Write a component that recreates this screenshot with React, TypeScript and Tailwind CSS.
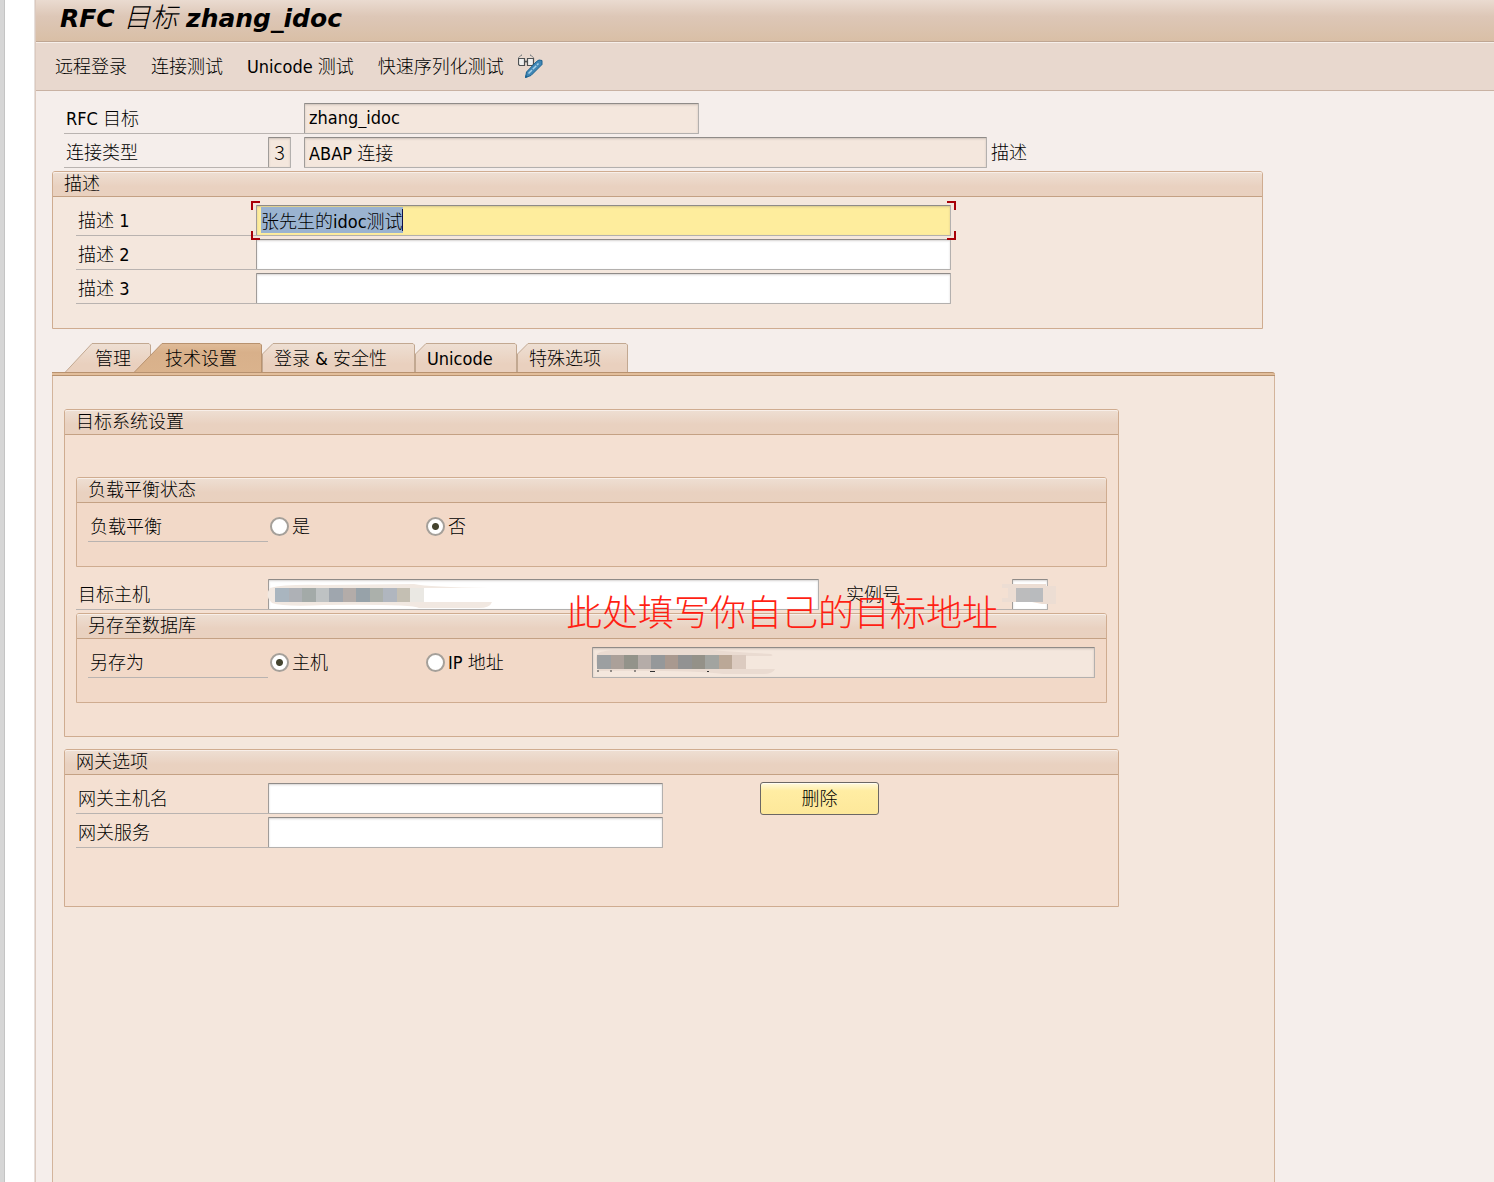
import React, { useEffect, useRef } from "react";
import clsx from "clsx";

const fieldBase =
  "block h-[31px] rounded-[1px] border border-[#b3b0ae] border-t-[#8f8b88] border-l-[#a09c99] px-1 pb-[2px] leading-6 font-light text-black outline-none shadow-[inset_0_1px_2px_rgba(120,110,105,0.3)]";

const Field = React.forwardRef<
  HTMLInputElement,
  React.InputHTMLAttributes<HTMLInputElement>
>(({ className, readOnly, ...props }, ref) => (
  <input
    ref={ref}
    type="text"
    readOnly={readOnly}
    className={clsx(fieldBase, readOnly ? "bg-[#f4e7dd]" : "bg-white", className)}
    {...props}
  />
));

const Label = ({
  htmlFor,
  className,
  children,
}: {
  htmlFor?: string;
  className: string;
  children: React.ReactNode;
}) => (
  <label
    htmlFor={htmlFor}
    className={clsx(
      "block h-[31px] shrink-0 border-b border-[#b9b3b0] pl-[2px] leading-8 whitespace-nowrap",
      className
    )}
  >
    {children}
  </label>
);

const Group = ({
  title,
  className,
  children,
}: {
  title: string;
  className?: string;
  children: React.ReactNode;
}) => (
  <section
    className={clsx("w-full rounded-t-[3px] border border-[#cfac90]", className)}
  >
    <h2 className="h-[25px] rounded-t-[2px] border-b border-[#c4a184] bg-linear-to-b from-[#eedfd3] via-[#e9d1c0] via-60% to-[#e9d1bf] pl-[11px] leading-6 shadow-[inset_0_1px_0_#f8efe9]">
      {title}
    </h2>
    {children}
  </section>
);

const Radio = ({
  name,
  label,
  defaultChecked,
}: {
  name: string;
  label: string;
  defaultChecked?: boolean;
}) => (
  <label className="flex h-[30px] w-[156px] items-center gap-[3px] pl-[2px] whitespace-nowrap">
    <input
      type="radio"
      name={name}
      defaultChecked={defaultChecked}
      className="size-[19px] appearance-none rounded-full border-2 border-[#a5a09a] bg-white checked:bg-[radial-gradient(circle,#45442f_3px,#ffffff_4px)]"
    />
    {label}
  </label>
);

const tabs = [
  { label: "管理", width: 87, slant: 28, pad: "pl-[31px] w-[87px]" },
  { label: "技术设置", width: 129, slant: 29, pad: "-ml-[18px] pl-8 w-[129px]", active: true },
  { label: "登录 & 安全性", width: 153, slant: 11, pad: "pl-3 w-[153px]" },
  { label: "Unicode", width: 102, slant: 11, pad: "pl-3 w-[102px]" },
  { label: "特殊选项", width: 111, slant: 11, pad: "pl-3 w-[111px]" },
];

const Tabs = () => (
  <div role="tablist" className="flex pl-3">
    {tabs.map(({ label, width, slant, pad, active }) => {
      const foot = slant > 20 ? 30 : slant;
      const shape = `M0.5 30 V${foot} L${slant} 0.5 H${width - 2} L${width - 0.5} 2 V30`;
      return (
        <button
          key={label}
          role="tab"
          aria-selected={!!active}
          className={clsx(
            "relative h-[30px] shrink-0 text-left leading-8 whitespace-nowrap",
            active && "z-10",
            pad
          )}
        >
          <svg
            aria-hidden="true"
            width={width}
            height="30"
            className="absolute inset-0"
          >
            <defs>
              <linearGradient id="tabFill" x1="0" y1="0" x2="0" y2="1">
                <stop offset="0" stopColor="#eedfd3" />
                <stop offset="0.7" stopColor="#e9d0be" />
                <stop offset="1" stopColor="#e9d0be" />
              </linearGradient>
              <linearGradient id="tabActive" x1="0" y1="0" x2="0" y2="1">
                <stop offset="0" stopColor="#dfbb98" />
                <stop offset="0.3" stopColor="#d8b08a" />
                <stop offset="1" stopColor="#dab38d" />
              </linearGradient>
            </defs>
            <path
              d={shape}
              fill={active ? "url(#tabActive)" : "url(#tabFill)"}
              stroke={active ? "#b8926f" : "#c2a891"}
            />
          </svg>
          <span className="relative">{label}</span>
        </button>
      );
    })}
  </div>
);

const hostCells = [
  "#a9b5bf", "#aeb1b6", "#a3aaa8", "#bec2c3", "#9fa6ae", "#b3aca9",
  "#97a2a9", "#abb0ab", "#b0b6bf", "#c4bfb3", "#eae8e3",
];

const savedCells = [
  "#9c9fa1", "#aba099", "#93938a", "#b5aca8", "#95989a", "#a9998f",
  "#929292", "#949188", "#a2a4a0", "#bba897", "#dccbc0",
];

const Cells = ({ colors, x, y }: { colors: string[]; x: number; y: number }) => (
  <>
    {colors.map((c, i) => (
      <rect
        key={i}
        x={x + i * 13.5}
        y={y}
        width="13.6"
        height="14"
        fill={c}
        shapeRendering="crispEdges"
      />
    ))}
  </>
);

const GlassesPencil = () => (
  <svg aria-hidden="true" width="26" height="26" viewBox="0 0 26 26" fill="none">
    <path d="M0.5 5 V3.5 L3 1.5 M3.5 2 V0.5 M12.5 2 V0.5 M15.5 5 V3.5 L13 1.5" stroke="#85888a" />
    <path d="M0.5 4.5 H6.5 V11.5 H1.5 L0.5 10.5 Z M9.5 4.5 H15.5 V10.5 L14.5 11.5 H9.5 Z" fill="#f1f0ef" stroke="#4e5153" strokeWidth="1.2" />
    <path d="M6.5 8.5 Q8 6 9.5 8.5" stroke="#4e5153" strokeWidth="1.4" />
    <path d="M7.5 23.5 L8.5 18 L18.5 7.5 L21 6 L24 6.5 V10.5 L13 21.5 Z" fill="#3f86b5" stroke="#1c628f" />
    <path d="M10.5 19.5 L20.5 9.5" stroke="#a6cfe8" strokeWidth="1.5" strokeDasharray="5 1" />
    <path d="M7 24 L7.8 21 L10 23 Z" fill="#17608f" />
  </svg>
);

const App = () => {
  const firstLine = useRef<HTMLInputElement>(null);

  useEffect(() => {
    firstLine.current?.focus();
    firstLine.current?.select();
  }, []);

  return (
    <div className="flex min-h-screen bg-white font-['DejaVu_Sans_Condensed','Noto_Sans_CJK_SC',sans-serif] text-[18px] font-light text-black">
      <div className="w-[35px] shrink-0 border-r border-[#e6dfdb]">
        <div className="h-full w-[5px] border-r border-[#c4c4c4] bg-[#d6d6d6]" />
      </div>

      <div className="flex min-w-0 flex-1 flex-col border-l border-[#dccabf] bg-[#f5eeeb]">
        <header className="flex h-[42px] items-start border-b border-[#bfa693] bg-linear-to-b from-[#eadbd0] via-[#ddc7b7] via-40% to-[#d9bfa6] pl-6">
          <h1 className="font-['DejaVu_Sans','Noto_Sans_CJK_SC',sans-serif] text-[25px] leading-9 font-bold whitespace-nowrap text-black italic">
            RFC <span className="text-[27px] font-light">目标</span> zhang_idoc
          </h1>
        </header>

        <nav className="flex h-[49px] items-center border-t border-b border-t-[#f6efea] border-b-[#c9b2a3] bg-[#e8d8ce] pl-[19px]">
          <div className="flex gap-6 whitespace-nowrap">
            <button>远程登录</button>
            <button>连接测试</button>
            <button>Unicode 测试</button>
            <button>快速序列化测试</button>
          </div>
          <button aria-label="显示/更改" className="ml-[14px]">
            <GlassesPencil />
          </button>
        </nav>

        <main className="flex flex-1 flex-col pt-3 pl-4">
          <div className="mb-[3px] flex flex-col gap-[3px] pl-3">
            <div className="flex">
              <Label htmlFor="dest" className="w-[240px]">
                RFC 目标
              </Label>
              <Field id="dest" readOnly value="zhang_idoc" className="w-full max-w-[395px]" />
            </div>
            <div className="flex">
              <Label htmlFor="ctype" className="w-[204px]">
                连接类型
              </Label>
              <Field
                id="ctype"
                readOnly
                value="3"
                className="mr-[13px] w-[23px] shrink-0 text-center font-['Noto_Sans_CJK_SC',sans-serif] text-[20px]"
              />
              <Field
                aria-label="连接类型说明"
                readOnly
                value="ABAP 连接"
                className="w-full max-w-[683px]"
              />
              <span className="ml-1 h-[31px] leading-8 whitespace-nowrap">描述</span>
            </div>
          </div>

          <Group title="描述" className="max-w-[1211px] bg-[#f4e7dd]">
            <div className="flex flex-col gap-[3px] pt-2 pb-6 pl-[23px]">
              <div className="flex">
                <Label htmlFor="desc1" className="w-[180px]">
                  描述 1
                </Label>
                <div className="relative w-full max-w-[695px]">
                  <input
                    ref={firstLine}
                    id="desc1"
                    type="text"
                    defaultValue="张先生的idoc测试"
                    className={clsx(
                      fieldBase,
                      "w-full bg-[#feed9d] selection:bg-[#9ab3d0] selection:text-black"
                    )}
                  />
                  <span className="absolute top-1 left-[146px] h-[22px] w-px bg-[#10104a]" />
                  <div className="pointer-events-none absolute -inset-x-[5px] -inset-y-1">
                    <span className="absolute top-0 left-0 size-[9px] border-t-2 border-l-2 border-[#a80008]" />
                    <span className="absolute top-0 right-0 size-[9px] border-t-2 border-r-2 border-[#a80008]" />
                    <span className="absolute bottom-0 left-0 size-[9px] border-b-2 border-l-2 border-[#a80008]" />
                    <span className="absolute right-0 bottom-0 size-[9px] border-r-2 border-b-2 border-[#a80008]" />
                  </div>
                </div>
              </div>
              <div className="flex">
                <Label htmlFor="desc2" className="w-[180px]">
                  描述 2
                </Label>
                <Field id="desc2" className="w-full max-w-[695px]" />
              </div>
              <div className="flex">
                <Label htmlFor="desc3" className="w-[180px]">
                  描述 3
                </Label>
                <Field id="desc3" className="w-full max-w-[695px]" />
              </div>
            </div>
          </Group>

          <div className="mt-[14px] flex w-full max-w-[1223px] flex-1 flex-col">
            <Tabs />
            <div className="relative z-10 -mt-px h-1 rounded-tr-[3px] border-y border-[#b8926f] bg-[#e2be9b]" />
            <div
              role="tabpanel"
              className="flex-1 border-x border-[#d3b49b] bg-[#f4e7dd] pt-[33px] pl-[11px]"
            >
              <Group title="目标系统设置" className="max-w-[1055px] bg-[#f4e0d2]">
                <div className="pt-[42px] pr-[11px] pb-[33px] pl-[11px]">
                  <Group title="负载平衡状态" className="bg-[#f2d9c8]">
                    <div className="flex pt-2 pb-6 pl-[11px]">
                      <Label className="w-[180px]">负载平衡</Label>
                      <Radio name="balance" label="是" />
                      <Radio name="balance" label="否" defaultChecked />
                    </div>
                  </Group>

                  <div className="relative mt-3 mb-[3px] flex">
                    <Label htmlFor="host" className="w-[192px]">
                      目标主机
                    </Label>
                    <div className="relative w-full max-w-[551px]">
                      <Field id="host" className="w-full" />
                      <svg
                        aria-hidden="true"
                        width="230"
                        height="29"
                        className="absolute top-px -left-1"
                      >
                        <path
                          d="M6 8 Q20 4 60 5 L150 4 Q165 7 225 8 H160 V22 H228 Q226 28 215 28 H155 Q148 24 60 25 Q20 27 8 23 Q0 16 6 8 Z"
                          fill="#f1e8e1"
                        />
                        <rect x="158" y="8" width="60" height="14" fill="#ffffff" />
                        <Cells colors={hostCells} x={11} y={8} />
                      </svg>
                    </div>
                    <Label htmlFor="instance" className="ml-[25px] w-[168px]">
                      实例号
                    </Label>
                    <div className="relative w-9 shrink-0">
                      <Field id="instance" className="w-full" />
                      <svg
                        aria-hidden="true"
                        width="56"
                        height="24"
                        className="absolute top-[3px] -left-[10px]"
                      >
                        <path d="M0 2 H44 V4 H54 V22 H40 L30 20 H0 V16 H6 V6 H0 Z" fill="#ecddd3" />
                        <rect x="14" y="6" width="14" height="14" fill="#bcbcbd" />
                        <rect x="28" y="6" width="13" height="14" fill="#b9bbbe" />
                      </svg>
                    </div>
                    <p className="pointer-events-none absolute top-2 left-[490px] z-10 text-[36px] leading-[54px] whitespace-nowrap text-[#ff1f14]">
                      此处填写你自己的目标地址
                    </p>
                  </div>

                  <Group title="另存至数据库" className="bg-[#f2d9c8]">
                    <div className="flex pt-2 pr-[11px] pb-6 pl-[11px]">
                      <Label className="w-[180px]">另存为</Label>
                      <Radio name="saveas" label="主机" defaultChecked />
                      <Radio name="saveas" label="IP 地址" />
                      <div className="relative ml-3 flex-1">
                        <Field aria-label="另存为地址" readOnly className="w-full" />
                        <svg
                          aria-hidden="true"
                          width="190"
                          height="29"
                          className="absolute top-px left-px"
                        >
                          <path
                            d="M4 6 Q10 1 40 2 L120 2 Q140 4 178 6 Q182 8 176 8 H150 V21 H182 Q180 26 170 26 H130 Q100 22 6 23 Q1 14 4 6 Z"
                            fill="#eadbd1"
                          />
                          <Cells colors={savedCells} x={4} y={7} />
                          <path
                            d="M4 23 H6 M17 23 H19 M41 23 H43 M57 23.5 H62 M114 23.5 H116"
                            stroke="#333"
                          />
                        </svg>
                      </div>
                    </div>
                  </Group>
                </div>
              </Group>

              <Group title="网关选项" className="mt-3 max-w-[1055px] bg-[#f4e0d2]">
                <div className="flex pt-2 pb-[58px] pl-[11px]">
                  <div className="flex w-full max-w-[587px] flex-col gap-[3px]">
                    <div className="flex">
                      <Label htmlFor="gwhost" className="w-[192px]">
                        网关主机名
                      </Label>
                      <Field id="gwhost" className="w-full" />
                    </div>
                    <div className="flex">
                      <Label htmlFor="gwservice" className="w-[192px]">
                        网关服务
                      </Label>
                      <Field id="gwservice" className="w-full" />
                    </div>
                  </div>
                  <button className="-mt-px ml-[97px] h-[33px] w-[119px] shrink-0 rounded-[3px] border border-[#6b6764] bg-linear-to-b from-[#fff9dd] via-[#ffeda3] via-25% to-[#fde89a] shadow-[inset_0_1px_0_#fffdf2]">
                    删除
                  </button>
                </div>
              </Group>
            </div>
          </div>
        </main>
      </div>
    </div>
  );
};

export default App;
